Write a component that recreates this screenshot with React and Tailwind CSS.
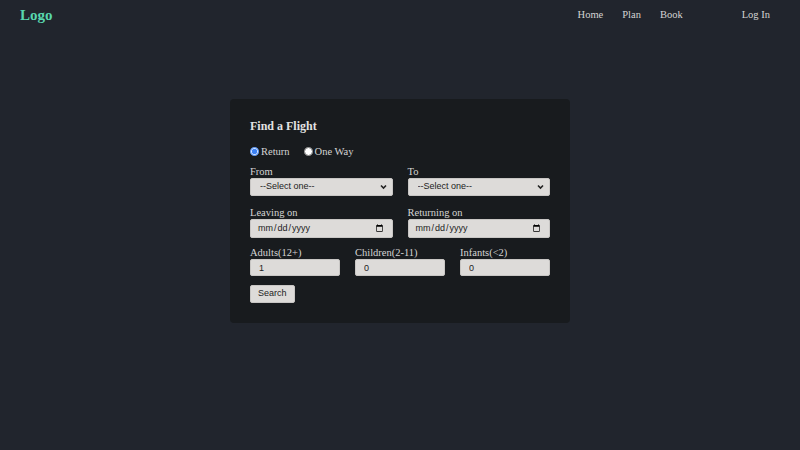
import React, { useState } from 'react';

const Field = ({ label, children }) => (
  <label className="flex flex-col">
    <span className="text-[10.5px] leading-[13px] text-[#d4d4d4]">{label}</span>
    {children}
  </label>
);

const inputCls =
  "bg-[#dddbd9] text-[#222] rounded-[2px] border border-[#c8c6c4] outline-none font-['Liberation_Sans',sans-serif]";

const Select = () => (
  <div className="relative h-[18px]">
    <select className={inputCls + ' block w-full appearance-none h-[18px] text-[9px] px-[9px]'}>
      <option>--Select one--</option>
    </select>
    <svg className="absolute right-[6px] top-[6px] pointer-events-none" width="7" height="6" viewBox="0 0 7 6">
      <path d="M1 1.5 L3.5 4 L6 1.5" fill="none" stroke="#222" strokeWidth="1.6" />
    </svg>
  </div>
);

const App = () => {
  const [trip, setTrip] = useState('return');

  return (
    <div className="min-h-screen w-full bg-[#21252d] font-['Liberation_Serif',serif] text-[#d4d4d4]">
      <header className="h-[30px] flex items-center justify-between pl-[20px] pr-[30px]">
        <div className="text-[15px] font-bold text-[#58d6ae]">Logo</div>
        <nav className="flex items-center text-[10.5px]">
          <a className="mr-[19px]">Home</a>
          <a className="mr-[19px]">Plan</a>
          <a className="mr-[59px]">Book</a>
          <a>Log In</a>
        </nav>
      </header>

      <div className="flex justify-center pt-[69px]">
        <div className="w-[340px] bg-[#181b1e] rounded-[4px] px-[20px] pt-[19px] pb-[20px]">
          <h2 className="text-[12px] font-bold leading-[16px] text-[#e2e2e2]">Find a Flight</h2>

          <div className="flex items-center mt-[11px] text-[10.5px] leading-[13px]">
            <label className="flex items-center mr-[14px]">
              <input
                type="radio"
                name="trip"
                checked={trip === 'return'}
                onChange={() => setTrip('return')}
                className="w-[9px] h-[9px] m-0 mr-[2px] accent-[#3b82f6]"
              />
              Return
            </label>
            <label className="flex items-center">
              <input
                type="radio"
                name="trip"
                checked={trip === 'oneway'}
                onChange={() => setTrip('oneway')}
                className="w-[9px] h-[9px] m-0 mr-[2px]"
              />
              One Way
            </label>
          </div>

          <div className="grid grid-cols-2 gap-x-[15px] mt-[7px]">
            <Field label="From">
              <Select />
            </Field>
            <Field label="To">
              <Select />
            </Field>
          </div>

          <div className="grid grid-cols-2 gap-x-[15px] mt-[10px]">
            <Field label="Leaving on">
              <input type="date" className={inputCls + " h-[19px] text-[9px] px-[6px] font-['Liberation_Mono',monospace]"} />
            </Field>
            <Field label="Returning on">
              <input type="date" className={inputCls + " h-[19px] text-[9px] px-[6px] font-['Liberation_Mono',monospace]"} />
            </Field>
          </div>

          <div className="grid grid-cols-3 gap-x-[15px] mt-[8px]">
            <Field label="Adults(12+)">
              <input type="text" defaultValue="1" className={inputCls + ' h-[17px] text-[9px] px-[8px]'} />
            </Field>
            <Field label="Children(2-11)">
              <input type="text" defaultValue="0" className={inputCls + ' h-[17px] text-[9px] px-[8px]'} />
            </Field>
            <Field label="Infants(<2)">
              <input type="text" defaultValue="0" className={inputCls + ' h-[17px] text-[9px] px-[8px]'} />
            </Field>
          </div>

          <button className={inputCls + ' mt-[9px] h-[18px] px-[7px] text-[9px]'}>Search</button>
        </div>
      </div>
    </div>
  );
};

export default App;
